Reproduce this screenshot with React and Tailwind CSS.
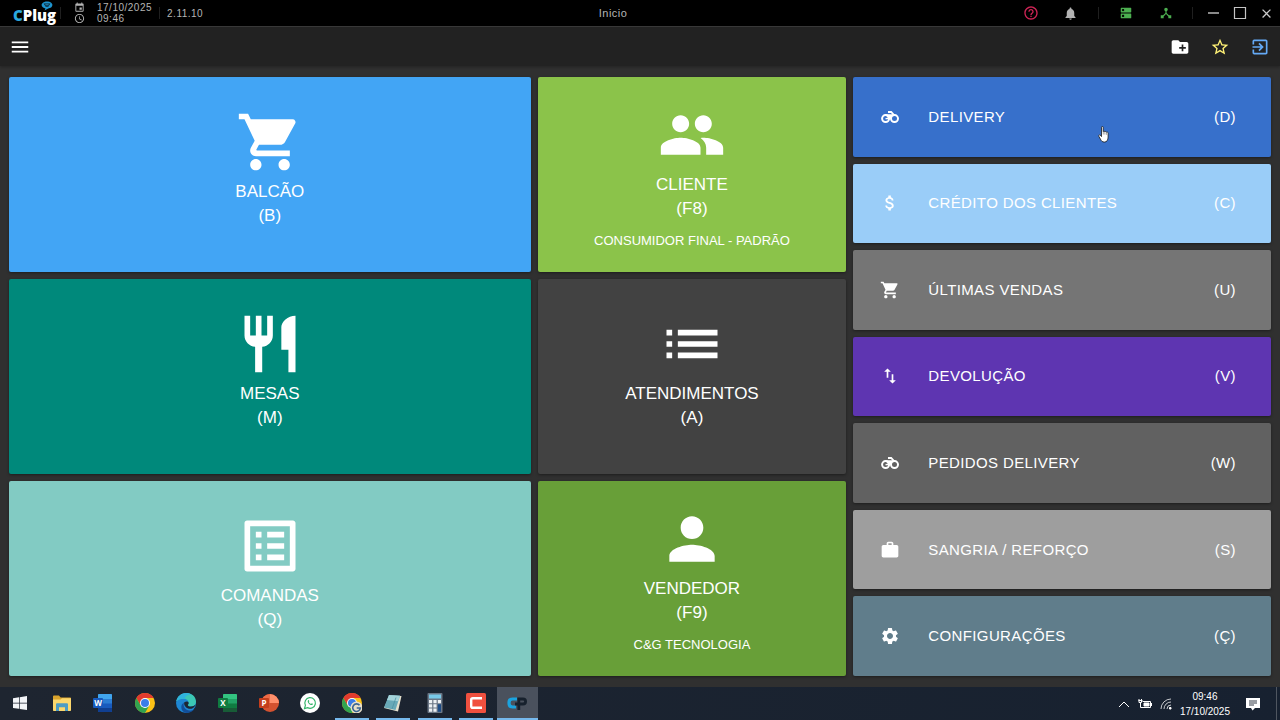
import {
  MdAttachMoney,
  MdAccessTime,
  MdClose,
  MdCreateNewFolder,
  MdDeviceHub,
  MdDns,
  MdExitToApp,
  MdEvent,
  MdGroup,
  MdHelpOutline,
  MdImportExport,
  MdList,
  MdListAlt,
  MdMenu,
  MdNotifications,
  MdPerson,
  MdRestaurant,
  MdSettings,
  MdShoppingCart,
  MdStarBorder,
  MdWork,
} from "react-icons/md"

function MotorcycleIcon({ className }) {
  return (
    <svg viewBox="0 0 18 18" fill="none" stroke="currentColor" className={className}>
      <circle cx="4.600" cy="10.600" r="3.500" strokeWidth="2" />
      <circle cx="13.500" cy="10.600" r="3.500" strokeWidth="2" />
      <path d="M7 4h3.200l3.300 3.600" strokeWidth="1.800" />
      <path d="M4.500 10.600h2.800" strokeWidth="1.400" />
      <path d="M4 6.300h8.300l-1.500 2.500-1.500 2.600H8z" fill="currentColor" stroke="none" />
    </svg>
  )
}

const salesTiles = [
  { label: "BALCÃO", shortcut: "B", icon: MdShoppingCart, color: "bg-[#42a5f5]" },
  { label: "MESAS", shortcut: "M", icon: MdRestaurant, color: "bg-[#00897b]" },
  { label: "COMANDAS", shortcut: "Q", icon: MdListAlt, color: "bg-[#82cbc3]" },
]

const peopleTiles = [
  { label: "CLIENTE", shortcut: "F8", icon: MdGroup, color: "bg-[#8bc34a]", detail: "CONSUMIDOR FINAL - PADRÃO" },
  { label: "ATENDIMENTOS", shortcut: "A", icon: MdList, color: "bg-[#424242]" },
  { label: "VENDEDOR", shortcut: "F9", icon: MdPerson, color: "bg-[#689f38]", detail: "C&G TECNOLOGIA" },
]

const actions = [
  { label: "DELIVERY", shortcut: "D", icon: MotorcycleIcon, size: "size-[18px]", color: "bg-[#3770cb]", hovered: true },
  { label: "CRÉDITO DOS CLIENTES", shortcut: "C", icon: MdAttachMoney, size: "size-5", color: "bg-[#9acdf8]" },
  { label: "ÚLTIMAS VENDAS", shortcut: "U", icon: MdShoppingCart, size: "size-5", color: "bg-[#757575]" },
  { label: "DEVOLUÇÃO", shortcut: "V", icon: MdImportExport, size: "size-5", color: "bg-[#5e35b1]" },
  { label: "PEDIDOS DELIVERY", shortcut: "W", icon: MotorcycleIcon, size: "size-[18px]", color: "bg-[#616161]" },
  { label: "SANGRIA / REFORÇO", shortcut: "S", icon: MdWork, size: "size-5", color: "bg-[#9e9e9e]" },
  { label: "CONFIGURAÇÕES", shortcut: "Ç", icon: MdSettings, size: "size-5", color: "bg-[#607d8b]" },
]

function Separator() {
  return <div className="h-3 w-px bg-[#1f1f1f]" />
}

function Logo() {
  return (
    <div className="relative flex h-6 w-10 items-end font-['Open_Sans',sans-serif] text-[15px] leading-5 font-extrabold tracking-normal text-white">
      <span className="text-[#2ba7df]">C</span>
      <span>Plug</span>
      <svg viewBox="0 0 12 10" className="absolute top-0 right-0 h-[10px] w-3">
        <path d="M6 .4C9 .4 11.4 2 11.4 4S9.500 7.200 7.200 7.500L3.500 9.600 4.500 7.400C2.500 7 .6 5.900.6 4S3 .4 6 .4z" fill="#1d94cf" />
        <path d="M2.600 2.600h6.800L7.300 5.800H4.700z" fill="#0a2636" />
        <path d="M4.300 3.800h3.400" stroke="#33b4ec" strokeWidth=".8" />
      </svg>
    </div>
  )
}

function TitleBar() {
  return (
    <header className="flex h-[26px] items-center justify-between bg-black text-[10px] tracking-wider text-[#b5b5b5]">
      <div className="flex items-center pl-[13px]">
        <Logo />
        <div className="ml-[7px] flex items-center">
          <Separator />
          <div className="mr-3 ml-[13px] flex flex-col">
            <MdEvent className="size-[11px]" />
            <MdAccessTime className="size-[11px]" />
          </div>
          <div className="mr-[7px] leading-[11px]">
            <div>17/10/2025</div>
            <div>09:46</div>
          </div>
          <Separator />
          <span className="ml-[7px]">2.11.10</span>
        </div>
      </div>
      <div className="text-[11px]">Inicio</div>
      <div className="flex items-center justify-end pr-1.5">
        <button aria-label="Ajuda" className="text-[#cf2456]">
          <MdHelpOutline className="size-4" />
        </button>
        <button aria-label="Notificações" className="ml-6 text-[#b3b3b3]">
          <MdNotifications className="size-[15px]" />
        </button>
        <div className="mr-5 ml-5">
          <Separator />
        </div>
        <button aria-label="Servidor" className="text-[#4caf50]">
          <MdDns className="size-[14px]" />
        </button>
        <button aria-label="Rede" className="mr-[19px] ml-[26px] text-[#4caf50]">
          <MdDeviceHub className="size-[14px]" />
        </button>
        <Separator />
        <button aria-label="Minimizar" className="ml-[14px]">
          <svg viewBox="0 0 12 12" className="size-3" stroke="#c4c4c4" strokeWidth="1.400">
            <path d="M1 6h11" />
          </svg>
        </button>
        <button aria-label="Maximizar" className="ml-[14px]">
          <svg viewBox="0 0 14 14" className="size-[14px]" fill="none" stroke="#c4c4c4" strokeWidth="1.200">
            <path d="M1.500 1.500h11v11h-11z" />
          </svg>
        </button>
        <button aria-label="Fechar" className="ml-3 text-[#c9c9c9]">
          <MdClose className="size-[15px]" />
        </button>
      </div>
    </header>
  )
}

function Toolbar() {
  return (
    <nav className="flex h-10 items-center justify-between border-t border-[#383838] bg-[#222222] pr-[10px] pl-[9px] text-white shadow-[0_1px_3px_rgba(0,0,0,0.3)]">
      <button aria-label="Menu">
        <MdMenu className="size-[22px]" />
      </button>
      <div className="flex items-center gap-5">
        <button aria-label="Nova pasta">
          <MdCreateNewFolder className="size-5" />
        </button>
        <button aria-label="Favoritos" className="text-[#fff176]">
          <MdStarBorder className="size-5" />
        </button>
        <button aria-label="Sair" className="text-[#64a9f5]">
          <MdExitToApp className="size-5" />
        </button>
      </div>
    </nav>
  )
}

function Tile({ tile }) {
  const Icon = tile.icon
  return (
    <button
      className={`flex flex-col items-center justify-center rounded-xs text-[17px] leading-6 text-white shadow-[0_1px_3px_rgba(0,0,0,0.4)] ${tile.color} ${tile.detail ? "" : "pb-3.5"}`}
    >
      <Icon className="mb-1 size-[68px]" />
      <span>{tile.label}</span>
      <span>({tile.shortcut})</span>
      {tile.detail && <span className="mt-3 text-[13px] leading-4">{tile.detail}</span>}
    </button>
  )
}

function HandCursor() {
  return (
    <svg viewBox="0 0 11 17" className="absolute top-[49px] left-[58.5%] h-[17px] w-[11px]">
      <path
        d="M3.500 1.300c0-1.100 1.700-1.100 1.700 0v4.400c.3-.7 1.500-.6 1.600.2.400-.6 1.500-.4 1.600.4.500-.5 1.700-.2 1.700.8v4c0 2.800-1.200 5-3.700 5-2.200 0-3.200-1.300-4-3L.8 10.200c-.5-1 .7-1.800 1.500-1l1.200 1.400z"
        fill="#fff"
        stroke="#1b1b1b"
        strokeWidth=".8"
      />
      <path d="M5.300 6v2.500M6.900 6.300v2.300M8.500 6.800v2" stroke="#555" strokeWidth=".5" />
    </svg>
  )
}

function ActionButton({ action }) {
  const Icon = action.icon
  return (
    <button
      className={`relative flex items-center rounded-xs pr-[35px] pl-[27px] text-[15px] leading-5 tracking-wide text-white shadow-[0_1px_3px_rgba(0,0,0,0.4)] ${action.color}`}
    >
      <span className="flex w-5 justify-center">
        <Icon className={action.size} />
      </span>
      <span className="ml-7">{action.label}</span>
      <span className="ml-auto">({action.shortcut})</span>
      {action.hovered && <HandCursor />}
    </button>
  )
}

/* Taskbar icons */

function WindowsIcon() {
  return (
    <svg viewBox="0 0 20 20" className="size-5" fill="#f2f4f7">
      <path d="M2 5.200l6-.9v5.400H2zM8.700 4.200L16 3.100v6.600H8.700zM2 10.400h6v5.400l-6-.9zM8.700 10.400H16V17l-7.300-1.100z" />
    </svg>
  )
}

function ExplorerIcon() {
  return (
    <svg viewBox="0 0 20 20" className="size-5">
      <path d="M1 3.500c0-.6.300-1 .9-1h5l1.800 2H18c.6 0 1 .4 1 1V16H1z" fill="#d9a32c" />
      <path d="M1 6.500h7.500L10 5.300h9V17c0 .6-.4 1-1 1H2c-.6 0-1-.4-1-1z" fill="#fbd76d" />
      <path d="M4 11.500c0-.8.500-1.300 1.200-1.300h9.600c.7 0 1.200.5 1.200 1.300V18h-3v-3.800H7V18H4z" fill="#4d9cc4" />
    </svg>
  )
}

function OfficeIcon({ letter, light, mid, base, dark, badge }) {
  return (
    <svg viewBox="0 0 20 20" className="size-5">
      <rect x="5" y="1" width="14" height="18" rx="1" fill={base} />
      <path d="M5 2a1 1 0 011-1h12a1 1 0 011 1v4H5z" fill={light} />
      <path d="M5 6h14v4.500H5z" fill={mid} />
      <path d="M5 15h14v3a1 1 0 01-1 1H6a1 1 0 01-1-1z" fill={dark} />
      <rect y="5" width="10" height="10" rx="1" fill={badge} />
      <text x="5" y="12.800" textAnchor="middle" fill="#fff" fontSize="8" fontWeight="700" fontFamily="Open Sans, sans-serif">
        {letter}
      </text>
    </svg>
  )
}

function PowerPointIcon() {
  return (
    <svg viewBox="0 0 20 20" className="size-5">
      <circle cx="11" cy="10" r="9" fill="#d35230" />
      <path d="M11 1a9 9 0 019 9h-9z" fill="#ff8f6b" />
      <path d="M11 1v9H2a9 9 0 019-9z" fill="#ed6c47" />
      <rect y="5" width="10" height="10" rx="1" fill="#c43e1c" />
      <text x="5" y="12.800" textAnchor="middle" fill="#fff" fontSize="8" fontWeight="700" fontFamily="Open Sans, sans-serif">
        P
      </text>
    </svg>
  )
}

function ChromeIcon({ profile }) {
  return (
    <svg viewBox="0 0 20 20" className="size-5">
      <circle cx="10" cy="10" r="10" fill="#fbc116" />
      <path d="M1.340 5A10 10 0 0118.660 5H10L5.670 12.500z" fill="#e33b2e" />
      <path d="M1.340 5A10 10 0 0010 20l4.330-7.500H5.670z" fill="#31a350" />
      <circle cx="10" cy="10" r="5" fill="#fff" />
      <circle cx="10" cy="10" r="4" fill="#3b7de9" />
      {profile && (
        <>
          <circle cx="14.500" cy="14.500" r="6" fill="#e9dfc8" />
          <path d="M17.500 12.300a3.800 3.800 0 10.800 2.700h-3.600" fill="none" stroke="#3a6594" strokeWidth="1.600" />
        </>
      )}
    </svg>
  )
}

function EdgeIcon() {
  return (
    <svg viewBox="0 0 20 20" className="size-5">
      <circle cx="10" cy="10" r="10" fill="#1d86d3" />
      <path d="M.3 8.500C1.300 3.500 5.400 0 10.300 0 16 0 20 4 20 8.600c0 3-2.300 5-5 5-2 0-3.300-.8-3.200-1.600.1-.5.900-.8.900-2.200 0-2-2-4-5-4C4.500 5.800 1.500 6.600.3 8.500z" fill="#3cc7b4" />
      <path d="M.3 8.500C1.300 3.500 5.400 0 10.300 0c2 0 4 .6 5.500 1.600C11 1.500 9 4 8.800 5.900 5.500 5.500 2 6 .3 8.500z" fill="#30b3dd" />
      <path d="M8 9.500c-1.500 4 1.500 8 5.500 8 2 0 3.500-.6 5-1.600-2 2.700-5 4.100-8.500 4.100C5 19 3.500 12 8 9.500z" fill="#124e99" />
      <path d="M8.300 9.300c2.500-1.500 4.300-.5 4.400.7 0 1-.9 1.500-.9 2 .1.900 1.400 1.600 3.200 1.600 2.100 0 3.600-.8 4.400-2-.3 2-1.600 3.300-3.200 3.900-4.200 1.500-9-2-7.900-6.200z" fill="#1d2633" />
    </svg>
  )
}

function WhatsAppIcon() {
  return (
    <svg viewBox="0 0 20 20" className="size-5">
      <circle cx="10" cy="10" r="10" fill="#fff" />
      <path d="M4.500 15.500l.9-3.200a5.300 5.300 0 112.200 2.300z" fill="none" stroke="#35b66b" strokeWidth="1.200" />
      <path d="M8 7.400c.7-.8 1 .1 1.300.9l-.5.800c.6 1 1.200 1.500 2.200 1.900l.8-.7c.8.300 1.600.6 1 1.300-1.300 1.600-6.300-1.700-4.800-4.200z" fill="#35b66b" />
    </svg>
  )
}

function NotepadIcon() {
  return (
    <svg viewBox="0 0 20 20" className="size-5">
      <path d="M6.500 2.500L18.500 3 15 18.500 1 15z" fill="#e4e0cd" />
      <path d="M6 2l11 .8L12.500 17 1 14.500z" fill="#68a9b8" />
      <path d="M6 2l11 .8-1.800 5.500L4 7z" fill="#a3d3da" />
      <path d="M13 4.500L9 16" stroke="#4d93a3" strokeWidth=".8" />
    </svg>
  )
}

function CalculatorIcon() {
  return (
    <svg viewBox="0 0 20 20" className="size-5">
      <rect x="2.500" width="15" height="20" rx="1" fill="#6b7786" />
      <rect x="4" y="1.500" width="12" height="4" fill="#78c9e8" />
      <g fill="#eef1f4">
        <path d="M4 7h3.200v3.200H4zM8.400 7h3.200v3.200H8.400zM12.800 7H16v3.200h-3.200zM4 11.300h3.200v3.200H4zM8.400 11.300h3.200v3.200H8.400zM4 15.600h3.200v3.200H4zM8.400 15.600h3.200v3.200H8.400z" />
      </g>
      <path d="M12.800 11.300H16v7.500h-3.200z" fill="#1d4c86" />
    </svg>
  )
}

function CamtasiaIcon() {
  return (
    <svg viewBox="0 0 20 20" className="size-5">
      <rect width="20" height="20" rx="1.500" fill="#f0503f" />
      <path d="M16 5.200H6.800c-1 0-1.600.6-1.600 1.600v6.400c0 1 .6 1.600 1.600 1.600H16" fill="none" stroke="#fff" strokeWidth="2.400" />
    </svg>
  )
}

function CPlugIcon() {
  return (
    <svg viewBox="0 0 20 14" className="h-[14px] w-5">
      <path d="M10 3H5.500C3.500 3 2 4.500 2 7s1.500 4 3.500 4H9" fill="none" stroke="#1ba3df" strokeWidth="3.200" />
      <path d="M11.800 14V3H16c1.700 0 2.600 1 2.600 2.500S17.700 8 16 8H8" fill="none" stroke="#17212d" strokeWidth="2.800" />
    </svg>
  )
}

const taskbarApps = [
  { name: "Iniciar", icon: <WindowsIcon /> },
  { name: "Explorador de Arquivos", icon: <ExplorerIcon /> },
  { name: "Word", icon: <OfficeIcon letter="W" light="#41a5ee" mid="#2b7cd3" base="#185abd" dark="#103f91" badge="#185abd" /> },
  { name: "Chrome", icon: <ChromeIcon /> },
  { name: "Edge", icon: <EdgeIcon /> },
  { name: "Excel", icon: <OfficeIcon letter="X" light="#33c481" mid="#21a366" base="#107c41" dark="#185c37" badge="#107c41" /> },
  { name: "PowerPoint", icon: <PowerPointIcon /> },
  { name: "WhatsApp", icon: <WhatsAppIcon /> },
  { name: "Chrome - perfil", icon: <ChromeIcon profile />, open: true },
  { name: "Bloco de Notas", icon: <NotepadIcon />, open: true },
  { name: "Calculadora", icon: <CalculatorIcon />, open: true },
  { name: "Camtasia", icon: <CamtasiaIcon />, open: true },
  { name: "CPlug", icon: <CPlugIcon />, active: true },
]

function Taskbar() {
  return (
    <footer className="flex h-[33px] items-stretch justify-between bg-linear-to-r from-[#1e2530] to-[#172130]">
      <div className="grid w-[538px] grid-cols-13">
        {taskbarApps.map((app) => (
          <button
            key={app.name}
            aria-label={app.name}
            className={`flex flex-col items-center justify-between pt-1.5 ${app.active ? "bg-[#4a515d]" : ""}`}
          >
            <span className="flex h-5 items-center">{app.icon}</span>
            {app.open && <span className="h-0.5 w-[34px] bg-[#76b9ed]" />}
            {app.active && <span className="h-0.5 w-full bg-[#76b9ed]" />}
          </button>
        ))}
      </div>

      {/* System tray */}
      <div className="flex items-center text-white">
        <svg viewBox="0 0 12 8" className="h-2 w-3" fill="none" stroke="currentColor">
          <path d="M1 7l5-5 5 5" />
        </svg>
        <svg viewBox="0 0 14 10" className="ml-2 h-[10px] w-[14px]" fill="none" stroke="currentColor">
          <path d="M4.500 2.500h8v6h-8" />
          <path d="M6 4h5v3H6z" fill="currentColor" />
          <path d="M13.500 4v3M.5 1.500h4M1 0v3.500h2.500V0M2.500 4v4.500H5" />
        </svg>
        <svg viewBox="0 0 12 12" className="ml-2 size-3" fill="none" stroke="currentColor">
          <path d="M1 11A10 10 0 0111 1M4 11a7 7 0 017-7M7 11a4 4 0 014-4" opacity=".75" />
          <path d="M9.500 9.500h1.500v1.500h-1.500z" fill="currentColor" />
        </svg>
        <div className="ml-2 text-center text-[10px] leading-[15px]">
          <div>09:46</div>
          <div>17/10/2025</div>
        </div>
        <button aria-label="Central de ações" className="ml-4">
          <svg viewBox="0 0 14 14" className="size-[14px]">
            <path d="M0 1h14v10H9l-2.500 2.500L5 11H0z" fill="#fff" />
            <path d="M3 4h8M3 6h8M3 8h5" stroke="#1b2432" strokeWidth=".9" />
          </svg>
        </button>
        <div className="mr-[3px] ml-4 h-full w-px bg-[#4f5660]" />
      </div>
    </footer>
  )
}

export default function App() {
  return (
    <div className="flex min-h-screen flex-col bg-[#303030] font-['Liberation_Sans',Arial,sans-serif]">
      <TitleBar />
      <Toolbar />

      {/* Main Content */}
      <main className="grid flex-1 grid-cols-[522fr_309fr_418fr] gap-x-[7px] px-[9px] py-[11px]">
        <div className="grid auto-rows-fr gap-[7px]">
          {salesTiles.map((tile) => (
            <Tile key={tile.label} tile={tile} />
          ))}
        </div>
        <div className="grid auto-rows-fr gap-[7px]">
          {peopleTiles.map((tile) => (
            <Tile key={tile.label} tile={tile} />
          ))}
        </div>
        <div className="grid auto-rows-fr gap-[7px]">
          {actions.map((action) => (
            <ActionButton key={action.label} action={action} />
          ))}
        </div>
      </main>

      <Taskbar />
    </div>
  )
}
